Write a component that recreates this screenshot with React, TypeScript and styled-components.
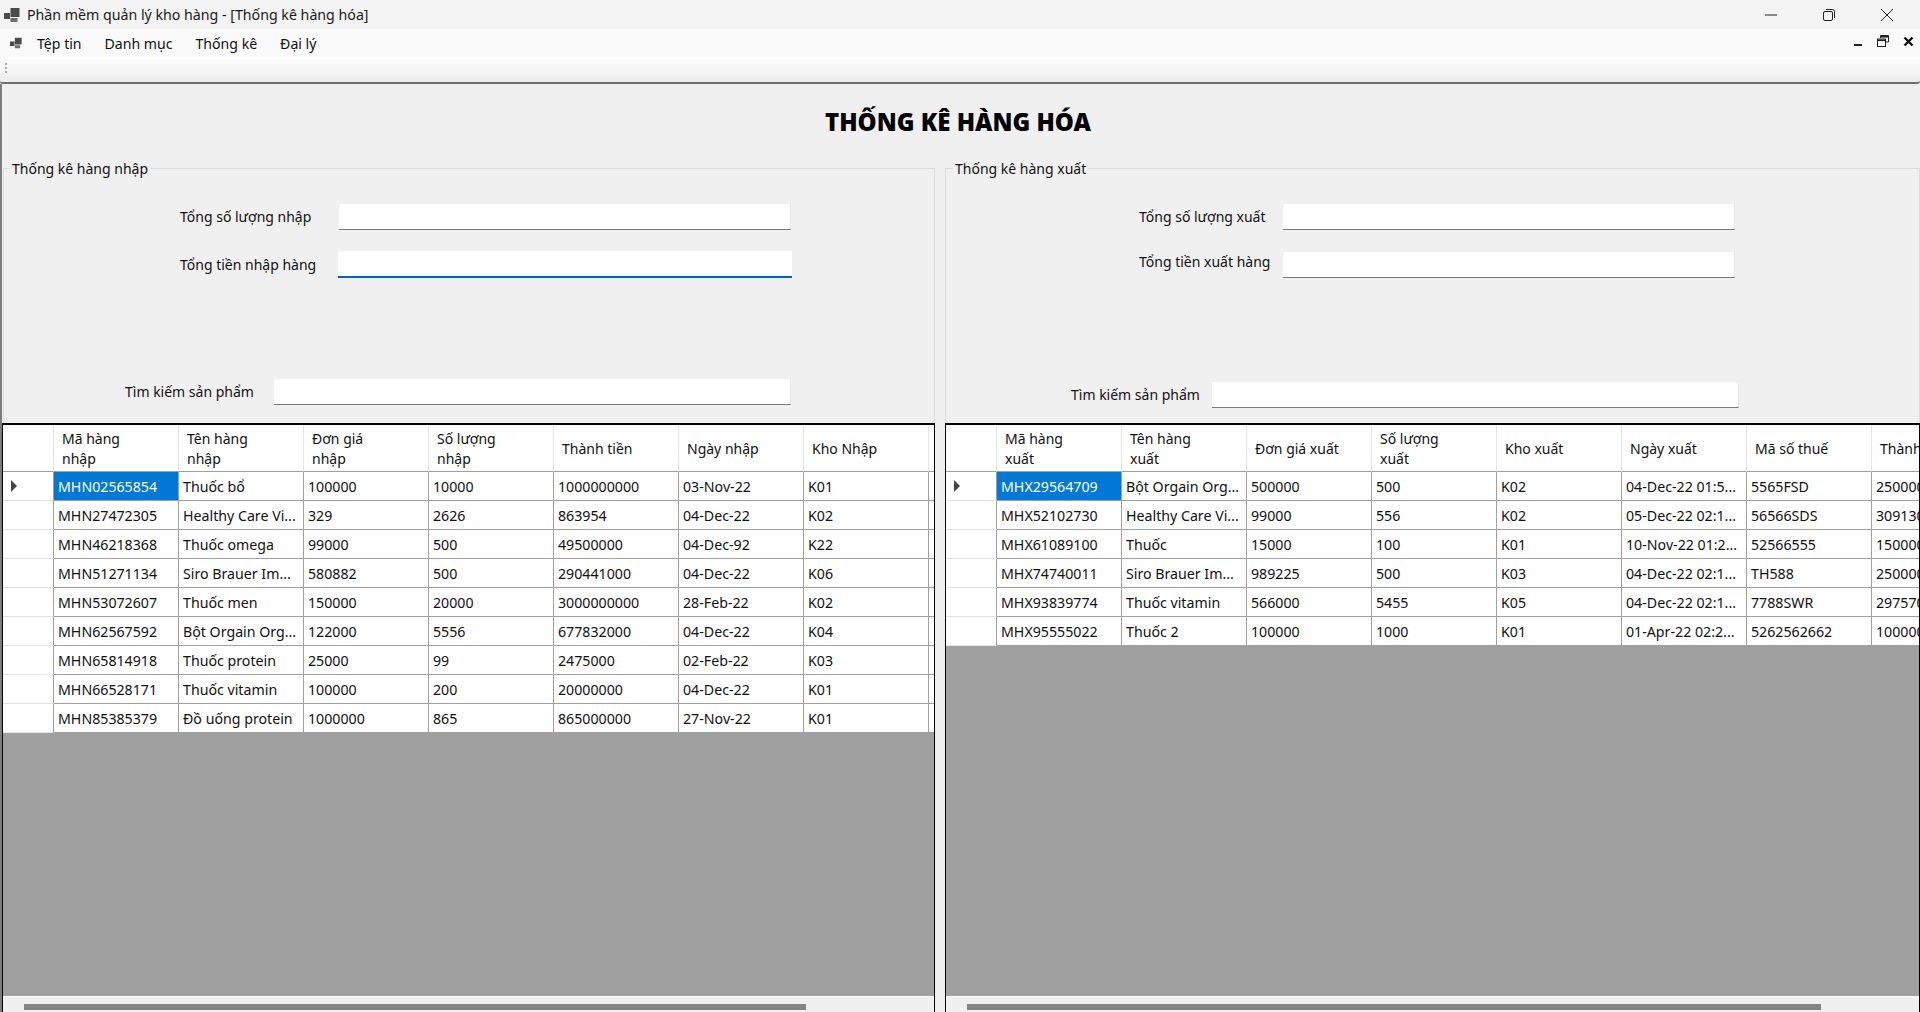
import React from "react";
import styled, { createGlobalStyle } from "styled-components";

const Global = createGlobalStyle`
  html, body { margin: 0; padding: 0; height: 100%; overflow: hidden; }
  body { font-family: "Noto Sans", "Open Sans", sans-serif; font-size: 14px; color: #000; background: #f0f0f0; }
  #root { height: 100%; }
  * { box-sizing: border-box; }
`;

const Window = styled.div`
  width: 1920px;
  height: 1012px;
  display: flex;
  flex-direction: column;
  overflow: hidden;
  background: #f0f0f0;
`;

const TitleBar = styled.header`
  flex: none;
  height: 29px;
  display: flex;
  align-items: center;
  background: #f3f3f3;
  padding: 0 4px;
`;

const TitleText = styled.span`
  margin-left: 7px;
  font-size: 14.2px;
  color: #1a1a1a;
  flex: 1;
  line-height: 27px;
`;

const Controls = styled.div`
  display: flex;
`;

const CaptionButton = styled.div`
  width: 58px;
  height: 29px;
  display: flex;
  align-items: center;
  justify-content: center;
`;

const MenuBar = styled.nav`
  flex: none;
  height: 28px;
  display: flex;
  align-items: center;
  background: #fafafa;
  padding-left: 10px;
`;

const MenuItems = styled.div`
  display: flex;
  gap: 23px;
  margin-left: 15px;
  flex: 1;
  padding-top: 1px;
`;

const MenuItem = styled.span`
  font-size: 14.1px;
  line-height: 20px;
  color: #111;
`;

const ChildControls = styled.div`
  display: flex;
  align-items: center;
  gap: 14px;
  padding-right: 6px;
  margin-top: -4px;
`;

const ToolBar = styled.div`
  flex: none;
  height: 27px;
  background: linear-gradient(#fdfdfd, #f8f8f8 40%, #ececec);
  border-bottom: 2px solid #6f6f6f;
  border-radius: 0 0 3px 3px;
  padding: 6px 0 0 5px;
`;

const Grip = styled.div`
  width: 2px;
  height: 12px;
  background: repeating-linear-gradient(#a8a8a8 0 2px, transparent 2px 4px);
`;

const Client = styled.main`
  flex: 1;
  min-height: 0;
  display: flex;
  flex-direction: column;
  border-left: 2px solid #7d7d7d;
`;

const Heading = styled.h1`
  flex: none;
  height: 74px;
  margin: 0;
  padding: 22px 6px 0 0;
  text-align: center;
  font-size: 24px;
  line-height: 32px;
  font-weight: 900;
  color: #000;
`;

const Columns = styled.div`
  flex: 1;
  min-height: 0;
  display: grid;
  grid-template-columns: 933px 975px;
  column-gap: 10px;
`;

const Column = styled.section`
  display: flex;
  flex-direction: column;
  min-width: 0;
  min-height: 0;
`;

const GroupBox = styled.fieldset<{ $inset: number }>`
  flex: none;
  height: 265px;
  margin: 0 0 0 ${(p) => p.$inset}px;
  padding: 0;
  min-width: 0;
  border: 1px solid #dcdcdc;
  border-bottom: none;
  display: block;
`;

const Legend = styled.legend<{ $left: number }>`
  margin-left: ${(p) => p.$left}px;
  padding: 0 2px;
  font-size: 14px;
  line-height: 20px;
  color: #111;
  position: relative;
  top: 1px;
`;

const FieldRow = styled.div<{ $top: number; $indent: number; $labelWidth: number; $labelShift?: number }>`
  display: flex;
  align-items: center;
  margin-top: ${(p) => p.$top}px;
  padding-left: ${(p) => p.$indent}px;
  & > label {
    flex: none;
    width: ${(p) => p.$labelWidth}px;
    font-size: 14px;
    line-height: 20px;
    color: #111;
    position: relative;
    top: ${(p) => p.$labelShift ?? 0}px;
  }
`;

const Input = styled.input<{ $width: number; $focused?: boolean }>`
  flex: none;
  width: ${(p) => p.$width + (p.$focused ? 2 : 0)}px;
  height: ${(p) => (p.$focused ? 27 : 26)}px;
  margin-left: ${(p) => (p.$focused ? -1 : 0)}px;
  border: none;
  padding: 0;
  background: #fff;
  outline: none;
  border-bottom: ${(p) => (p.$focused ? "2px solid #0067c0" : "1px solid #7a7a7a")};
  border-right: ${(p) => (p.$focused ? "none" : "1px solid #e8e8e8")};
`;

const DataGrid = styled.div`
  flex: 1;
  min-height: 0;
  display: flex;
  flex-direction: column;
  border-top: 2px solid #000;
  border-left: 1px solid #000;
  border-right: 1px solid #000;
`;

const GridBody = styled.div`
  flex: 1;
  min-height: 0;
  overflow: hidden;
  background: #a0a0a0;
  border-bottom: 1px solid #fff;
`;

const Table = styled.table`
  border-collapse: separate;
  border-spacing: 0;
  table-layout: fixed;
  background: #fff;
`;

const HeadCell = styled.th`
  height: 47px;
  padding: 1px 4px 0 8px;
  text-align: left;
  font-weight: 400;
  font-size: 14px;
  line-height: 20px;
  white-space: pre-line;
  color: #111;
  background: #fff;
  border-right: 1px solid #e4e4e4;
  border-bottom: 1px solid #a0a0a0;
`;

const Corner = styled(HeadCell)`
  border-right: 1px solid #e4e4e4;
`;

const RowHead = styled.td`
  height: 29px;
  padding: 0;
  background: #fff;
  border-right: 1px solid #a0a0a0;
  border-bottom: 1px solid #e4e4e4;
  vertical-align: middle;
`;

const Arrow = styled.div`
  width: 0;
  height: 0;
  margin-left: 8px;
  border-left: 6px solid #444;
  border-top: 6px solid transparent;
  border-bottom: 6px solid transparent;
`;

const Cell = styled.td<{ $selected?: boolean }>`
  height: 29px;
  padding: 1px 0 0 4px;
  font-size: 14.2px;
  line-height: 20px;
  white-space: nowrap;
  overflow: hidden;
  color: ${(p) => (p.$selected ? "#fff" : "#111")};
  background: ${(p) => (p.$selected ? "#0078d7" : "#fff")};
  border-right: 1px solid #a0a0a0;
  border-bottom: 1px solid #a0a0a0;
`;

const ScrollTrack = styled.div`
  flex: none;
  height: 15px;
  background: #f0f0f0;
  padding-top: 7px;
`;

const ScrollThumb = styled.div<{ $left: number; $width: number }>`
  height: 6px;
  margin-left: ${(p) => p.$left}px;
  width: ${(p) => p.$width}px;
  background: #858585;
`;

const AppIcon = ({ size }: { size: number }) => (
  <svg width={size} height={size} viewBox="0 0 16 16" fill="#4a4a4a">
    <rect x="0" y="6" width="6" height="6" />
    <rect x="6.5" y="1" width="9" height="9" />
    <rect x="6.5" y="11" width="7" height="4" opacity="0.8" />
  </svg>
);

const Minimize = () => (
  <svg width="14" height="14" viewBox="0 0 14 14"><path d="M1 7h12" stroke="#222" strokeWidth="1" /></svg>
);
const Restore = () => (
  <svg width="14" height="14" viewBox="0 0 14 14" fill="none" stroke="#222" strokeWidth="1">
    <rect x="1.5" y="3.5" width="9" height="9" rx="1.5" />
    <path d="M4 1.5h6.5a2 2 0 0 1 2 2V10" />
  </svg>
);
const Close = () => (
  <svg width="14" height="14" viewBox="0 0 14 14"><path d="M1 1l12 12M13 1L1 13" stroke="#222" strokeWidth="1" /></svg>
);

const ChildMin = () => (
  <svg width="10" height="12" viewBox="0 0 10 12"><path d="M1 10h8" stroke="#222" strokeWidth="2" /></svg>
);
const ChildRestore = () => (
  <svg width="12" height="12" viewBox="0 0 12 12" fill="#fff" stroke="#222" strokeWidth="1">
    <path d="M3.5 3V.5h8V7H8.5" />
    <path d="M3.5 1.8h8" strokeWidth="1.6" />
    <rect x="0.5" y="4" width="8" height="7.5" />
    <path d="M.5 5.3h8" strokeWidth="1.6" />
  </svg>
);
const ChildClose = () => (
  <svg width="11" height="11" viewBox="0 0 11 11"><path d="M1.5 1.5l8 8M9.5 1.5l-8 8" stroke="#111" strokeWidth="2.4" /></svg>
);

type GridProps = {
  columns: string[];
  rows: string[][];
  thumbLeft: number;
  thumbWidth: number;
};

const Grid = ({ columns, rows, thumbLeft, thumbWidth }: GridProps) => (
  <DataGrid>
    <GridBody>
      <Table style={{ width: 51 + columns.length * 125 }}>
        <colgroup>
          <col style={{ width: 51 }} />
          {columns.map((_, i) => (
            <col key={i} style={{ width: 125 }} />
          ))}
        </colgroup>
        <thead>
          <tr>
            <Corner />
            {columns.map((c, i) => (
              <HeadCell key={i}>{c}</HeadCell>
            ))}
          </tr>
        </thead>
        <tbody>
          {rows.map((r, i) => (
            <tr key={i}>
              <RowHead>{i === 0 && <Arrow />}</RowHead>
              {r.map((v, j) => (
                <Cell key={j} $selected={i === 0 && j === 0}>
                  {v}
                </Cell>
              ))}
            </tr>
          ))}
        </tbody>
      </Table>
    </GridBody>
    <ScrollTrack>
      <ScrollThumb $left={thumbLeft} $width={thumbWidth} />
    </ScrollTrack>
  </DataGrid>
);

const importColumns = ["Mã hàng\nnhập", "Tên hàng\nnhập", "Đơn giá\nnhập", "Số lượng\nnhập", "Thành tiền", "Ngày nhập", "Kho Nhập", ""];
const importRows = [
  ["MHN02565854", "Thuốc bổ", "100000", "10000", "1000000000", "03-Nov-22", "K01", ""],
  ["MHN27472305", "Healthy Care Vi...", "329", "2626", "863954", "04-Dec-22", "K02", ""],
  ["MHN46218368", "Thuốc omega", "99000", "500", "49500000", "04-Dec-92", "K22", ""],
  ["MHN51271134", "Siro Brauer Im...", "580882", "500", "290441000", "04-Dec-22", "K06", ""],
  ["MHN53072607", "Thuốc men", "150000", "20000", "3000000000", "28-Feb-22", "K02", ""],
  ["MHN62567592", "Bột Orgain Org...", "122000", "5556", "677832000", "04-Dec-22", "K04", ""],
  ["MHN65814918", "Thuốc protein", "25000", "99", "2475000", "02-Feb-22", "K03", ""],
  ["MHN66528171", "Thuốc vitamin", "100000", "200", "20000000", "04-Dec-22", "K01", ""],
  ["MHN85385379", "Đồ uống protein", "1000000", "865", "865000000", "27-Nov-22", "K01", ""],
];

const exportColumns = ["Mã hàng\nxuất", "Tên hàng\nxuất", "Đơn giá xuất", "Số lượng\nxuất", "Kho xuất", "Ngày xuất", "Mã số thuế", "Thành tiền"];
const exportRows = [
  ["MHX29564709", "Bột Orgain Org...", "500000", "500", "K02", "04-Dec-22 01:5...", "5565FSD", "250000000"],
  ["MHX52102730", "Healthy Care Vi...", "99000", "556", "K02", "05-Dec-22 02:1...", "56566SDS", "309130000"],
  ["MHX61089100", "Thuốc", "15000", "100", "K01", "10-Nov-22 01:2...", "52566555", "150000000"],
  ["MHX74740011", "Siro Brauer Im...", "989225", "500", "K03", "04-Dec-22 02:1...", "TH588", "250000000"],
  ["MHX93839774", "Thuốc vitamin", "566000", "5455", "K05", "04-Dec-22 02:1...", "7788SWR", "297570000"],
  ["MHX95555022", "Thuốc 2", "100000", "1000", "K01", "01-Apr-22 02:2...", "5262562662", "100000000"],
];

export default function App() {
  return (
    <Window>
      <Global />
      <TitleBar>
        <AppIcon size={16} />
        <TitleText>Phần mềm quản lý kho hàng - [Thống kê hàng hóa]</TitleText>
        <Controls>
          <CaptionButton><Minimize /></CaptionButton>
          <CaptionButton><Restore /></CaptionButton>
          <CaptionButton><Close /></CaptionButton>
        </Controls>
      </TitleBar>
      <MenuBar>
        <AppIcon size={12} />
        <MenuItems>
          <MenuItem>Tệp tin</MenuItem>
          <MenuItem>Danh mục</MenuItem>
          <MenuItem>Thống kê</MenuItem>
          <MenuItem>Đại lý</MenuItem>
        </MenuItems>
        <ChildControls>
          <ChildMin />
          <ChildRestore />
          <ChildClose />
        </ChildControls>
      </MenuBar>
      <ToolBar><Grip /></ToolBar>
      <Client>
        <Heading>THỐNG KÊ HÀNG HÓA</Heading>
        <Columns>
          <Column>
            <GroupBox $inset={1}>
              <Legend $left={6}>Thống kê hàng nhập</Legend>
              <FieldRow $top={26} $indent={176} $labelWidth={159}>
                <label>Tổng số lượng nhập</label>
                <Input $width={452} />
              </FieldRow>
              <FieldRow $top={21} $indent={176} $labelWidth={159}>
                <label>Tổng tiền nhập hàng</label>
                <Input $width={452} $focused />
              </FieldRow>
              <FieldRow $top={101} $indent={121} $labelWidth={149}>
                <label>Tìm kiếm sản phẩm</label>
                <Input $width={517} />
              </FieldRow>
            </GroupBox>
            <Grid columns={importColumns} rows={importRows} thumbLeft={21} thumbWidth={782} />
          </Column>
          <Column>
            <GroupBox $inset={0}>
              <Legend $left={7}>Thống kê hàng xuất</Legend>
              <FieldRow $top={26} $indent={193} $labelWidth={144}>
                <label>Tổng số lượng xuất</label>
                <Input $width={452} />
              </FieldRow>
              <FieldRow $top={22} $indent={193} $labelWidth={144} $labelShift={-3}>
                <label>Tổng tiền xuất hàng</label>
                <Input $width={452} />
              </FieldRow>
              <FieldRow $top={104} $indent={125} $labelWidth={141}>
                <label>Tìm kiếm sản phẩm</label>
                <Input $width={527} />
              </FieldRow>
            </GroupBox>
            <Grid columns={exportColumns} rows={exportRows} thumbLeft={21} thumbWidth={854} />
          </Column>
        </Columns>
      </Client>
    </Window>
  );
}
